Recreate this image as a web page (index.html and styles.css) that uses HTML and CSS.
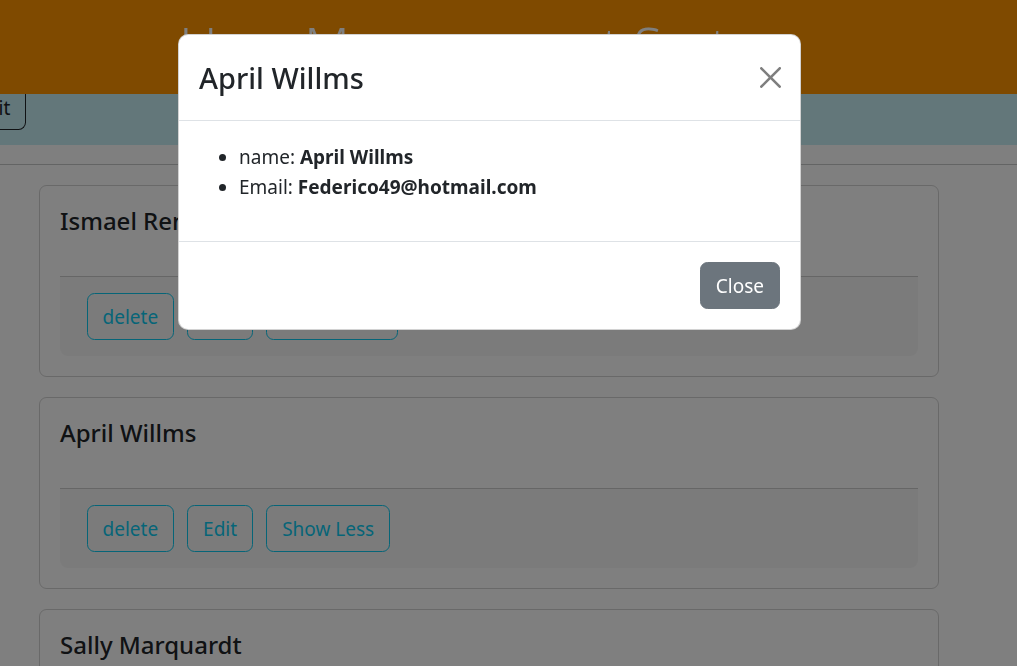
FILE: index.html
```html
<!DOCTYPE html>
<html>
<head>
<meta charset="utf-8">
<title>User Management System</title>
<link rel="stylesheet" href="styles.css">
</head>
<body>
<header class="topbar">
  <h1 class="site-title">User Management System</h1>
</header>
<nav class="toolbar">
  <button class="btn-exit">Exit</button>
</nav>
<hr class="divider">
<main class="user-list">
  <div class="card">
    <div class="card-body">
      <h5 class="card-title">Ismael Renner</h5>
      <div class="card-footer">
        <button class="btn-outline-info">delete</button>
        <button class="btn-outline-info">Edit</button>
        <button class="btn-outline-info">Show More</button>
      </div>
    </div>
  </div>
  <div class="card">
    <div class="card-body">
      <h5 class="card-title">April Willms</h5>
      <div class="card-footer">
        <button class="btn-outline-info">delete</button>
        <button class="btn-outline-info">Edit</button>
        <button class="btn-outline-info">Show Less</button>
      </div>
    </div>
  </div>
  <div class="card">
    <div class="card-body">
      <h5 class="card-title">Sally Marquardt</h5>
      <div class="card-footer">
        <button class="btn-outline-info">delete</button>
        <button class="btn-outline-info">Edit</button>
        <button class="btn-outline-info">Show More</button>
      </div>
    </div>
  </div>
</main>

<div class="backdrop"></div>
<div class="modal">
  <div class="modal-dialog">
    <div class="modal-header">
      <h4 class="modal-title">April Willms</h4>
      <button class="btn-close" aria-label="Close">
        <svg viewBox="0 0 16 16" width="21" height="21"><path d="M.293.293a1 1 0 0 1 1.414 0L8 6.586 14.293.293a1 1 0 1 1 1.414 1.414L9.414 8l6.293 6.293a1 1 0 0 1-1.414 1.414L8 9.414l-6.293 6.293a1 1 0 0 1-1.414-1.414L6.586 8 .293 1.707a1 1 0 0 1 0-1.414z"/></svg>
      </button>
    </div>
    <div class="modal-body">
      <ul class="detail-list">
        <li>name: <b>April Willms</b></li>
        <li>Email: <b>Federico49@hotmail.com</b></li>
      </ul>
    </div>
    <div class="modal-footer">
      <button class="btn-secondary">Close</button>
    </div>
  </div>
</div>
</body>
</html>
```

FILE: styles.css
```css
* { box-sizing: border-box; }

html, body { height: 100%; }

body {
  margin: 0;
  font-family: "Noto Sans", "Open Sans", sans-serif;
  color: #212529;
  background: #fff;
  overflow: hidden;
}

button { font-family: inherit; cursor: pointer; }

.topbar {
  background: #ff9400;
  padding: 11px 34px 15px 0;
}

.site-title {
  margin: 0;
  text-align: center;
  color: #fff;
  font-size: 52px;
  font-weight: 300;
  line-height: 68px;
}

.toolbar {
  background: #c6eef4;
  display: flex;
  height: 51px;
  align-items: flex-start;
}

.btn-exit {
  margin-left: -38px;
  background: transparent;
  border: 1px solid #212529;
  color: #212529;
  font-size: 19px;
  line-height: 28px;
  padding: 0 15px 7px;
  border-top: 0;
  border-radius: 0 0 7.5px 7.5px;
}

.divider {
  margin: 19px 0 20px;
  border: 0;
  border-top: 1px solid #212529;
  opacity: .25;
}

.user-list {
  margin-left: 39px;
  width: 900px;
  display: flex;
  flex-direction: column;
  gap: 20px;
}

.card {
  border: 1px solid rgba(0,0,0,.175);
  border-radius: 7.5px;
}

.card-body { padding: 20px; }

.card-title {
  margin: 0 0 40px;
  font-size: 24px;
  font-weight: 500;
  line-height: 30px;
}

.card-footer {
  background: rgba(0,0,0,.03);
  border-top: 1px solid rgba(0,0,0,.175);
  border-radius: 0 0 7.5px 7.5px;
  padding: 10px 20px;
  display: flex;
}

.btn-outline-info {
  margin: 6px 6.5px;
  background: transparent;
  border: 1px solid #0dcaf0;
  color: #0dcaf0;
  font-size: 19px;
  line-height: 30px;
  padding: 8px 15px 7px;
  border-radius: 7.5px;
}

.backdrop {
  position: fixed;
  inset: 0;
  background: rgba(0,0,0,.5);
}

.modal {
  position: fixed;
  inset: 0;
}

.modal-dialog {
  margin: 34px 0 0 178px;
  width: 623px;
  background: #fff;
  border: 1px solid rgba(0,0,0,.175);
  border-radius: 10px;
}

.modal-header {
  display: flex;
  align-items: center;
  justify-content: space-between;
  padding: 20px 19px 20px 20px;
  border-bottom: 1px solid #dee2e6;
}

.modal-title {
  margin: 0;
  font-size: 29px;
  font-weight: 500;
  line-height: 45px;
}

.btn-close {
  background: transparent;
  border: 0;
  padding: 0;
  width: 21px;
  height: 21px;
  display: flex;
}

.btn-close svg { fill: #000; opacity: .5; }

.modal-body { padding: 20px; }

.detail-list {
  margin: 0 0 20px;
  padding-left: 40px;
  font-size: 19px;
  line-height: 30px;
}

.detail-list li { padding-top: 1px; margin-bottom: -1px; }

.modal-footer {
  display: flex;
  justify-content: flex-end;
  padding: 15px;
  border-top: 1px solid #dee2e6;
}

.btn-secondary {
  margin: 5px;
  background: #6c757d;
  border: 1px solid #6c757d;
  color: #fff;
  font-size: 19px;
  line-height: 30px;
  padding: 8px 15px 7px;
  border-radius: 7.5px;
}
```
